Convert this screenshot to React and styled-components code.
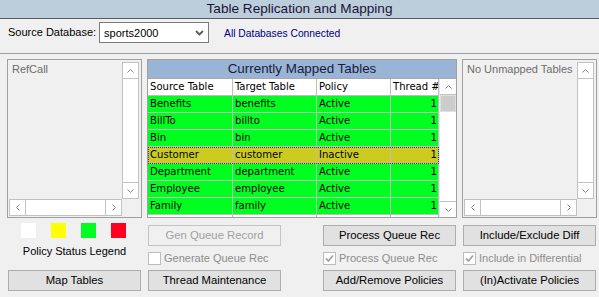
import React from 'react';
import styled, { createGlobalStyle } from 'styled-components';

const Global = createGlobalStyle`
  html, body { margin: 0; padding: 0; background: #f0f0f0; }
  body { font-family: "Liberation Sans", Arial, sans-serif; }
  * { box-sizing: border-box; }
`;

const NARROW = `"DejaVu Sans Condensed", "Liberation Sans", sans-serif`;

const Window = styled.div`
  width: 599px;
  height: 297px;
  background: #f0f0f0;
  display: flex;
  flex-direction: column;
  overflow: hidden;
`;

const TitleBar = styled.div`
  height: 19px;
  background: #bccddc;
  border-bottom: 1px solid #5a5a5a;
  text-align: center;
  font-size: 13.6px;
  line-height: 18px;
  color: #1c1436;
`;

const Toolbar = styled.div`
  height: 35px;
  display: flex;
  align-items: flex-start;
  padding: 3px 0 0 8px;
  border-bottom: 1px solid #a0a0a0;
`;

const Label = styled.span`
  font-size: 11px;
  line-height: 21px;
  color: #000;
  margin-right: 3px;
`;

const Select = styled.div`
  width: 110px;
  height: 21px;
  background: #fff;
  border: 1px solid #7a7a7a;
  display: flex;
  align-items: center;
  justify-content: space-between;
  padding: 0 4px 0 4px;
  font-size: 11px;
  color: #000;
`;

const Status = styled.span`
  font-size: 10.3px;
  color: #000080;
  margin: 6px 0 0 15px;
`;

const Main = styled.div`
  margin-top: 5px;
  height: 159px;
  display: flex;
  padding-left: 7px;
  gap: 5px;
`;

const ListPanel = styled.div`
  width: 135px;
  height: 159px;
  border: 1px solid #a0a0a0;
  background: #f0f0f0;
  display: grid;
  grid-template-columns: 1fr 17px;
  grid-template-rows: 1fr 17px;
  padding: 2px 2px 1px 1px;
`;

const ListText = styled.div`
  grid-column: 1;
  grid-row: 1;
  font-size: 11px;
  color: #6d6d6d;
  padding: 1px 0 0 3px;
  white-space: nowrap;
`;

const VScroll = styled.div`
  grid-column: 2;
  grid-row: 1;
  display: flex;
  flex-direction: column;
  background: #fff;
  border: 1px solid #c2c2c2;
`;

const HScroll = styled.div`
  grid-column: 1;
  grid-row: 2;
  display: flex;
  background: #fff;
  border: 1px solid #c2c2c2;
`;

const ArrowBox = styled.div`
  width: ${p => (p.$h ? '16px' : '100%')};
  height: ${p => (p.$h ? '100%' : '16px')};
  display: flex;
  align-items: center;
  justify-content: center;
  background: #fff;
  ${p => p.$side === 'top' && 'border-bottom: 1px solid #c2c2c2;'}
  ${p => p.$side === 'bottom' && 'border-top: 1px solid #c2c2c2;'}
  ${p => p.$side === 'left' && 'border-right: 1px solid #c2c2c2;'}
  ${p => p.$side === 'right' && 'border-left: 1px solid #c2c2c2;'}
`;

const Track = styled.div`
  flex: 1;
  background: #fff;
`;

const Grid = styled.div`
  width: 310px;
  height: 159px;
  border: 1px solid #a0a0a0;
  background: #fff;
  display: flex;
  flex-direction: column;
  overflow: hidden;
`;

const Caption = styled.div`
  height: 19px;
  background: #99b4d4;
  border-bottom: 1px solid #a8a8a8;
  text-align: center;
  font-size: 13.4px;
  line-height: 18px;
  color: #1a1a3e;
`;

const GridBody = styled.div`
  flex: 1;
  display: flex;
  min-height: 0;
`;

const Table = styled.div`
  width: 291px;
  display: flex;
  flex-direction: column;
`;

const Row = styled.div`
  display: grid;
  grid-template-columns: 85px 84px 74px 48px;
  height: ${p => (p.$fill ? 'auto' : '17px')};
  flex: ${p => (p.$fill ? '1' : 'none')};
  background: ${p => p.$bg};
  outline: ${p => (p.$focus ? '1px dotted #3b2bb0' : 'none')};
  outline-offset: -1px;
`;

const Cell = styled.div`
  border-right: 1px solid #bdbdbd;
  border-bottom: ${p => (p.$last ? 'none' : '1px solid #bdbdbd')};
  background: ${p => (p.$head ? '#fff' : 'transparent')};
  font-family: ${NARROW};
  font-size: 11.2px;
  line-height: 16px;
  color: #000;
  padding: 0 1px 0 2px;
  white-space: nowrap;
  overflow: hidden;
  text-align: ${p => (p.$right ? 'right' : 'left')};
`;

const GridScroll = styled.div`
  width: 17px;
  display: flex;
  flex-direction: column;
  background: #fff;
  border-left: 1px solid #e6e6e6;
`;

const Thumb = styled.div`
  height: 17px;
  background: #cdcdcd;
  border: 1px solid #e0e0e0;
`;

const Bottom = styled.div`
  margin-top: 7px;
  padding-left: 8px;
  display: grid;
  grid-template-columns: 133px 133px 28px 133px 133px;
  grid-template-rows: 21px 24px 21px;
  column-gap: 7px;
`;

const Legend = styled.div`
  grid-column: 1;
  grid-row: 1 / span 2;
  margin-top: -2px;
  display: flex;
  flex-direction: column;
`;

const Swatches = styled.div`
  display: flex;
  gap: 15px;
  padding-left: 13px;
`;

const Swatch = styled.div`
  width: 15px;
  height: 15px;
  background: ${p => p.$c};
`;

const LegendText = styled.div`
  margin-top: 7px;
  text-align: center;
  font-size: 11px;
  color: #000;
`;

const Button = styled.div`
  grid-column: ${p => p.$col};
  grid-row: ${p => p.$row};
  height: 21px;
  border: 1px solid ${p => (p.$disabled ? '#c4c4c4' : '#adadad')};
  background: ${p => (p.$disabled ? '#f0f0f0' : '#e1e1e1')};
  color: ${p => (p.$disabled ? '#a0a0a0' : '#000')};
  font-size: 11.3px;
  line-height: 19px;
  text-align: center;
  white-space: nowrap;
`;

const Check = styled.div`
  grid-column: ${p => p.$col};
  grid-row: 2;
  display: flex;
  align-items: center;
  gap: 3px;
  font-size: 11px;
  color: #8d8d8d;
  white-space: nowrap;
`;

const Box = styled.div`
  width: 13px;
  height: 13px;
  border: 1px solid #bcbcbc;
  background: #fff;
  display: flex;
  align-items: center;
  justify-content: center;
`;

const Chevron = ({ dir, color = '#858585' }) => {
  const pts = {
    up: '0.5,4.5 3.5,1.5 6.5,4.5',
    down: '0.5,1.5 3.5,4.5 6.5,1.5',
  };
  if (dir === 'left' || dir === 'right') {
    const p = dir === 'left' ? '4.5,0.5 1.5,3.5 4.5,6.5' : '1.5,0.5 4.5,3.5 1.5,6.5';
    return (
      <svg width="6" height="7" viewBox="0 0 6 7">
        <polyline points={p} fill="none" stroke={color} strokeWidth="1" />
      </svg>
    );
  }
  return (
    <svg width="7" height="6" viewBox="0 0 7 6">
      <polyline points={pts[dir]} fill="none" stroke={color} strokeWidth="1" />
    </svg>
  );
};

const CheckMark = () => (
  <svg width="9" height="9" viewBox="0 0 9 9">
    <polyline points="1,4.5 3.5,7 8,1.5" fill="none" stroke="#a3a3a3" strokeWidth="1.8" />
  </svg>
);

const List = ({ text }) => (
  <ListPanel>
    <ListText>{text}</ListText>
    <VScroll>
      <ArrowBox $side="top"><Chevron dir="up" /></ArrowBox>
      <Track />
      <ArrowBox $side="bottom"><Chevron dir="down" /></ArrowBox>
    </VScroll>
    <HScroll>
      <ArrowBox $h $side="left"><Chevron dir="left" /></ArrowBox>
      <Track />
      <ArrowBox $h $side="right"><Chevron dir="right" /></ArrowBox>
    </HScroll>
  </ListPanel>
);

const GREEN = '#00ff21';
const OLIVE = '#cccc20';

const rows = [
  ['Benefits', 'benefits', 'Active', '1'],
  ['BillTo', 'billto', 'Active', '1'],
  ['Bin', 'bin', 'Active', '1'],
  ['Customer', 'customer', 'Inactive', '1', true],
  ['Department', 'department', 'Active', '1'],
  ['Employee', 'employee', 'Active', '1'],
  ['Family', 'family', 'Active', '1'],
];

export default function App() {
  return (
    <>
      <Global />
      <Window>
        <TitleBar>Table Replication and Mapping</TitleBar>
        <Toolbar>
          <Label>Source Database:</Label>
          <Select>
            <span>sports2000</span>
            <svg width="9" height="6" viewBox="0 0 9 6">
              <polyline points="1,1 4.5,4.5 8,1" fill="none" stroke="#5a5a5a" strokeWidth="1.8" />
            </svg>
          </Select>
          <Status>All Databases Connected</Status>
        </Toolbar>
        <Main>
          <List text="RefCall" />
          <Grid>
            <Caption>Currently Mapped Tables</Caption>
            <GridBody>
              <Table>
                <Row $bg="#f0f0f0">
                  <Cell $head>Source Table</Cell>
                  <Cell $head>Target Table</Cell>
                  <Cell $head>Policy</Cell>
                  <Cell $head>Thread #</Cell>
                </Row>
                {rows.map(r => (
                  <Row key={r[0]} $bg={r[4] ? OLIVE : GREEN} $focus={r[4]}>
                    <Cell>{r[0]}</Cell>
                    <Cell>{r[1]}</Cell>
                    <Cell>{r[2]}</Cell>
                    <Cell $right>{r[3]}</Cell>
                  </Row>
                ))}
                <Row $fill $bg="#fff">
                  <Cell $last />
                  <Cell $last />
                  <Cell $last />
                  <Cell $last />
                </Row>
              </Table>
              <GridScroll>
                <ArrowBox $side="top"><Chevron dir="up" /></ArrowBox>
                <Thumb />
                <Track />
                <ArrowBox $side="bottom"><Chevron dir="down" /></ArrowBox>
              </GridScroll>
            </GridBody>
          </Grid>
          <List text="No Unmapped Tables" />
        </Main>
        <Bottom>
          <Legend>
            <Swatches>
              <Swatch $c="#ffffff" />
              <Swatch $c="#ffff00" />
              <Swatch $c="#00ff21" />
              <Swatch $c="#ff0021" />
            </Swatches>
            <LegendText>Policy Status Legend</LegendText>
          </Legend>
          <Button $col={2} $row={1} $disabled>Gen Queue Record</Button>
          <Button $col={4} $row={1}>Process Queue Rec</Button>
          <Button $col={5} $row={1}>Include/Exclude Diff</Button>
          <Check $col={2}><Box />Generate Queue Rec</Check>
          <Check $col={4}><Box><CheckMark /></Box>Process Queue Rec</Check>
          <Check $col={5}><Box><CheckMark /></Box>Include in Differential</Check>
          <Button $col={1} $row={3}>Map Tables</Button>
          <Button $col={2} $row={3}>Thread Maintenance</Button>
          <Button $col={4} $row={3}>Add/Remove Policies</Button>
          <Button $col={5} $row={3}>(In)Activate Policies</Button>
        </Bottom>
      </Window>
    </>
  );
}
